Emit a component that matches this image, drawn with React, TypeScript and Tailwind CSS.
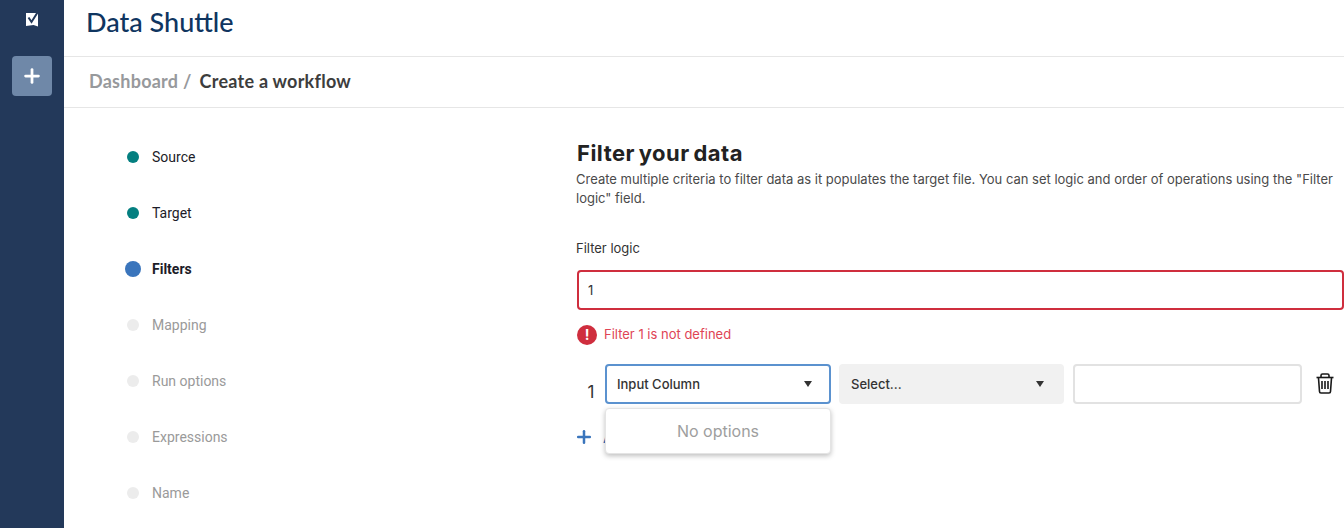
import React from 'react';
import { Plus } from 'lucide-react';

const steps = [
  { label: 'Source', state: 'done' },
  { label: 'Target', state: 'done' },
  { label: 'Filters', state: 'active' },
  { label: 'Mapping', state: 'todo' },
  { label: 'Run options', state: 'todo' },
  { label: 'Expressions', state: 'todo' },
  { label: 'Name', state: 'todo' },
];

const Caret: React.FC = () => (
  <svg width="8" height="6" viewBox="0 0 8 6" className="text-[#333]">
    <path d="M0 0h8L4 6z" fill="currentColor" />
  </svg>
);

const Logo: React.FC = () => (
  <svg width="14" height="15" viewBox="0 0 14 15">
    <path d="M1 1h12v13.500l-4.500-1.500L1 14z" fill="#fff" />
    <path d="M3.500 5.500l3 4.500L12.500 0.500" fill="none" stroke="#23395a" strokeWidth="2" />
  </svg>
);

const Trash: React.FC = () => (
  <svg width="18" height="21" viewBox="0 0 18 21" fill="none" stroke="#1a1a1a" strokeWidth="1.600">
    <path d="M0.500 4.500h17" />
    <path d="M5 4V2.500A1.500 1.500 0 0 1 6.500 1h5A1.500 1.500 0 0 1 13 2.500V4" />
    <path d="M2.500 5l1 13.500A1.500 1.500 0 0 0 5 20h8a1.500 1.500 0 0 0 1.500-1.500l1-13.500" />
    <path d="M6 8v8M9 8v8M12 8v8" />
  </svg>
);

const App: React.FC = () => {
  return (
    <div className="flex h-[528px] w-[1344px] overflow-hidden bg-white font-['Inter',sans-serif]">
      <aside className="flex w-16 shrink-0 flex-col items-center bg-[#23395a]">
        <div className="mt-[11px] flex h-4 items-center">
          <Logo />
        </div>
        <button className="mt-[29px] flex h-10 w-10 items-center justify-center rounded bg-[#6f88a8] text-white">
          <Plus size={22} strokeWidth={3} />
        </button>
      </aside>

      <div className="min-w-0 flex-1">
        <header className="flex h-[57px] items-center border-b border-[#e6e6e6] pb-3 pl-[22px]">
          <h1 className="font-['Lato',sans-serif] text-[27px] leading-8 font-medium text-[#0f3560]">Data Shuttle</h1>
        </header>
        <nav className="flex h-[51px] items-center border-b border-[#e6e6e6] pb-[2px] pl-[25px] font-['Lato',sans-serif] text-[18px] font-bold tracking-[0.25px]">
          <span className="text-[#97999c]">Dashboard /</span>
          <span className="ml-[8px] text-[#3d3d3d]">Create a workflow</span>
        </nav>

        <div className="flex">
          <ol className="w-[513px] shrink-0 pt-[21px] pl-[60px] font-['Roboto',sans-serif] text-[14px]">
            {steps.map((step) => (
              <li key={step.label} className="flex h-14 items-center">
                <span className="flex w-[18px] justify-center">
                  {step.state === 'done' && <span className="h-3 w-3 rounded-full bg-[#047f80]" />}
                  {step.state === 'active' && <span className="h-4 w-4 rounded-full bg-[#3a75bc]" />}
                  {step.state === 'todo' && <span className="h-3 w-3 rounded-full bg-[#ececec]" />}
                </span>
                <span
                  className={
                    step.state === 'todo'
                      ? 'ml-[10px] pt-[1px] text-[#9a9a9a]'
                      : step.state === 'active'
                        ? 'ml-[10px] pt-[1px] font-bold text-[#1c1c28]'
                        : 'ml-[10px] pt-[1px] text-[#1c1c28]'
                  }
                >
                  {step.label}
                </span>
              </li>
            ))}
          </ol>

          <main className="min-w-0 flex-1 pt-[31px]">
            <h2 className="text-[22px] leading-7 font-bold tracking-[0.5px] text-[#222] [word-spacing:-2px]">Filter your data</h2>
            <p className="mt-[3px] -ml-px text-[13px] leading-[19px] text-[#4a4a4a]">
              Create multiple criteria to filter data as it populates the target file. You can set logic and order of operations using the "Filter logic" field.
            </p>

            <label className="mt-[30px] -ml-px block text-[13px] leading-5 text-[#333]">Filter logic</label>
            <input
              readOnly
              value="1"
              className="mt-[12px] block h-10 w-full rounded border-2 border-[#cf2e3e] px-[9px] text-[13px] text-[#333] outline-none"
            />

            <div className="mt-[15px] flex items-center">
              <span className="flex h-5 w-5 items-center justify-center rounded-full bg-[#cf2e3e] text-[14px] leading-none font-bold text-white">!</span>
              <span className="ml-[7px] text-[13px] text-[#e04455]">Filter 1 is not defined</span>
            </div>

            <div className="mt-[19px] flex items-start">
              <span className="mt-[18px] w-[28px] text-center text-[17px] leading-5 text-[#333]">1</span>
              <div className="relative w-[226px] shrink-0">
                <div className="flex h-10 items-center justify-between rounded border-2 border-[#5b92cf] pr-[17px] pl-[10px] text-[13px] font-medium text-[#333]">
                  <span className="pt-[1px]">Input Column</span>
                  <Caret />
                </div>
                <div className="absolute top-[44px] left-0 z-10 flex h-[46px] w-full items-center justify-center rounded border border-[#e4e4e4] bg-white text-[16px] text-[#9e9e9e] shadow-[0_2px_5px_rgba(0,0,0,0.25)]">
                  No options
                </div>
              </div>
              <div className="ml-[8px] flex h-10 w-[225px] shrink-0 items-center justify-between rounded bg-[#f1f1f1] pr-[20px] pl-[12px] text-[13px] font-medium text-[#333]">
                <span className="pt-[1px]">Select...</span>
                <Caret />
              </div>
              <div className="ml-[9px] h-10 w-[229px] shrink-0 rounded border-2 border-[#e2e2e2]" />
              <span className="mt-[9px] ml-[14px]">
                <Trash />
              </span>
            </div>

            <div className="mt-[21px] flex h-6 items-center text-[#3a75bc]">
              <Plus size={20} strokeWidth={3} className="-ml-[3px]" />
              <span className="ml-[9px] text-[14px] font-medium">Add filter</span>
            </div>
          </main>
        </div>
      </div>
    </div>
  );
};

export default App;
